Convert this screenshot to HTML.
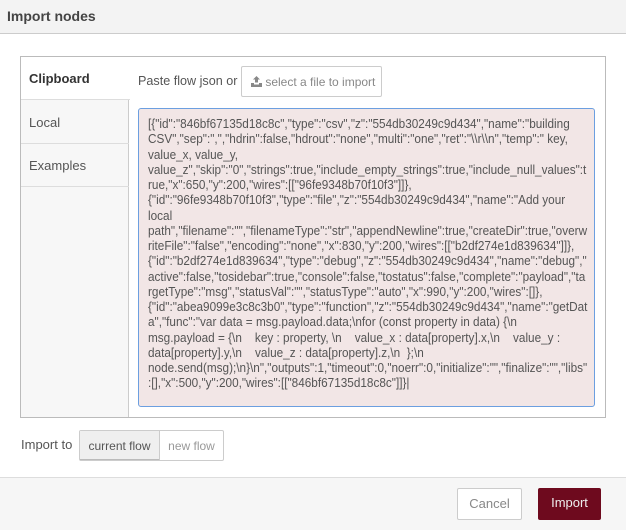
<!DOCTYPE html>
<html><head><style>
*{box-sizing:border-box;margin:0;padding:0}
body{width:626px;height:530px;background:#fff;font-family:"Liberation Sans",sans-serif;position:relative;overflow:hidden;color:#555}
.hdr{position:absolute;left:0;top:0;width:626px;height:34px;background:#f3f3f3;border-bottom:1px solid #ccc;font-weight:bold;font-size:14px;color:#444;padding:8px 0 0 7px}
.box{position:absolute;left:20px;top:56px;width:586px;height:362px;border:1px solid #bbb}
.left{position:absolute;left:0;top:0;width:108px;height:360px;background:#f7f7f7;border-right:1px solid #ccc}
.tab{position:absolute;left:0;width:108px;height:43px;font-size:13px;padding-left:8px;line-height:43px;color:#555;border-bottom:1px solid #ddd}
.tab.on{background:#fff;font-weight:bold;color:#333;width:109px;border-bottom:1px solid #ddd}
.lbl{position:absolute;left:138px;top:74px;font-size:12.6px;color:#555}
.fbtn{position:absolute;left:241px;top:66px;width:141px;height:31px;border:1px solid #ccc;border-radius:2px;font-size:12px;color:#888;padding:8px 0 0 9px;white-space:nowrap}
.ta{position:absolute;left:138px;top:108px;width:457px;height:299px;background:#f2e6e6;border:1px solid #6c9fe0;border-radius:3px;overflow:hidden}
.ta div{position:absolute;left:9px;top:7px;font-size:13px;line-height:15.25px;color:#555;white-space:pre;transform:scaleX(0.905);transform-origin:0 0}
.it{position:absolute;left:21px;top:437px;font-size:13px;color:#555}
.tg{position:absolute;left:79px;top:430px;height:31px;border:1px solid #ccc;border-radius:2px;display:flex;font-size:12px;width:145px}
.tg div{padding:8px 0 0;text-align:center}
.ft{position:absolute;left:0;top:477px;width:626px;height:53px;background:#f6f6f6;border-top:1px solid #ddd}
.b{position:absolute;top:488px;height:32px;font-size:13px;text-align:center;line-height:30px;border-radius:2px}
</style></head><body>
<div class="hdr">Import nodes</div>
<div class="box">
<div class="left">
<div class="tab on" style="top:0">Clipboard</div>
<div class="tab" style="top:44px">Local</div>
<div class="tab" style="top:87px">Examples</div>
</div>
</div>
<div class="lbl">Paste flow json or</div>
<div class="fbtn"><svg width="11" height="11" viewBox="0 0 11 11" style="vertical-align:-1px"><path d="M5.5 0L9 3.5H7v3H4v-3H2z" fill="#888"/><path d="M0 7h3v1.5h5V7h3v4H0z" fill="#888"/></svg> select a file to import</div>
<div class="ta"><div>[{"id":"846bf67135d18c8c","type":"csv","z":"554db30249c9d434","name":"building
CSV","sep":",","hdrin":false,"hdrout":"none","multi":"one","ret":"\\r\\n","temp":" key,
value_x, value_y,
value_z","skip":"0","strings":true,"include_empty_strings":true,"include_null_values":t
rue,"x":650,"y":200,"wires":[["96fe9348b70f10f3"]]},
{"id":"96fe9348b70f10f3","type":"file","z":"554db30249c9d434","name":"Add your
local
path","filename":"","filenameType":"str","appendNewline":true,"createDir":true,"overw
riteFile":"false","encoding":"none","x":830,"y":200,"wires":[["b2df274e1d839634"]]},
{"id":"b2df274e1d839634","type":"debug","z":"554db30249c9d434","name":"debug","
active":false,"tosidebar":true,"console":false,"tostatus":false,"complete":"payload","ta
rgetType":"msg","statusVal":"","statusType":"auto","x":990,"y":200,"wires":[]},
{"id":"abea9099e3c8c3b0","type":"function","z":"554db30249c9d434","name":"getDat
a","func":"var data = msg.payload.data;\nfor (const property in data) {\n
msg.payload = {\n    key : property, \n    value_x : data[property].x,\n    value_y :
data[property].y,\n    value_z : data[property].z,\n  };\n
node.send(msg);\n}\n","outputs":1,"timeout":0,"noerr":0,"initialize":"","finalize":"","libs"
:[],"x":500,"y":200,"wires":[["846bf67135d18c8c"]]}|</div></div>
<div class="it">Import to</div>
<div class="tg"><div style="width:80px;background:#efefef;border-right:1px solid #ccc;color:#555;box-shadow:inset 0 -1px 0 #bbb">current flow</div><div style="flex:1;color:#999">new flow</div></div>
<div class="ft"></div>
<div class="b" style="left:457px;width:65px;background:#fff;border:1px solid #ccc;color:#888">Cancel</div>
<div class="b" style="left:538px;width:63px;background:#6e0a1e;color:#eee">Import</div>
</body></html>
